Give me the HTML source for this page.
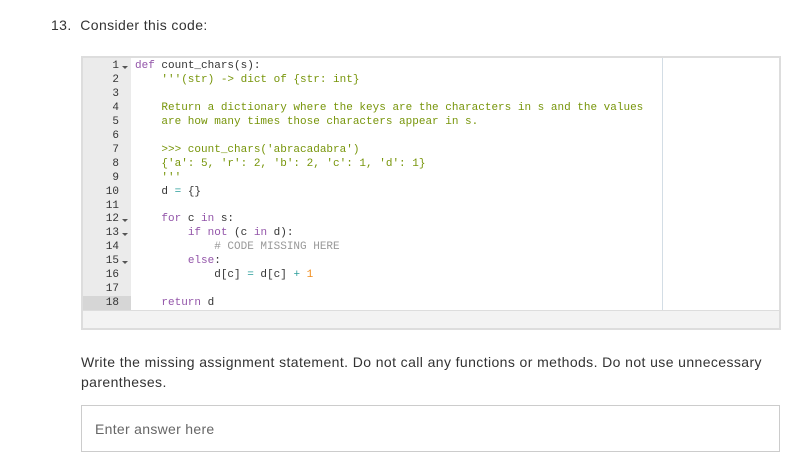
<!DOCTYPE html>
<html><head><style>
body{margin:0;width:804px;height:473px;background:#fff;font-family:"Liberation Sans",sans-serif;color:#333;position:relative;overflow:hidden}
.h{position:absolute;left:51px;top:17px;font-size:14px;color:#333;letter-spacing:0.4px}
.box{position:absolute;left:81px;top:56px;width:696px;height:270px;border:2px solid #ddd;background:#f3f3f3}
.ed{position:absolute;left:0;top:0;width:696px;height:252px;background:#fff;border-bottom:1px solid #ddd}
.gut{position:absolute;left:0;top:0;width:48px;height:252px;background:#ebebeb}
.pm{position:absolute;left:579px;top:0;width:1px;height:252px;background:#d3dde5}
.lines{position:absolute;left:0;top:2px;font-family:"Liberation Mono",monospace;font-size:11px;line-height:13.95px;white-space:pre}
.n{position:absolute;left:0;width:36px;text-align:right;color:#333}
.n.f::after{content:"";position:absolute;right:-9px;top:6px;border:3px solid transparent;border-top:3px solid #555}
.c{position:absolute;left:52px;color:#333}
.s{color:#77950a}.k{color:#9355a9}.o{color:#2a9d9a}.m{color:#999}.num{color:#f08c1c}
.act{position:absolute;left:0;top:238px;width:48px;height:14px;background:#d6d6d6}
.q{position:absolute;left:81px;top:352px;width:700px;font-size:14px;line-height:20px;color:#333;letter-spacing:0.4px}
.in{position:absolute;left:81px;top:405px;width:699px;height:47px;border:1px solid #ccc;box-sizing:border-box}
.in span{position:absolute;left:13px;top:15px;font-size:14px;color:#666;letter-spacing:0.3px}
</style></head><body>
<div class="h">13.&nbsp;&nbsp;Consider this code:</div>
<div class="box">
<div class="ed">
<div class="gut"></div><div class="act"></div><div class="pm"></div>
<div class="lines">
<div class="n f" style="top:0">1</div><div class="c" style="top:0"><span class="k">def</span> count_chars(s):</div>
<div class="n" style="top:13.95px">2</div><div class="c s" style="top:13.95px">    '''(str) -> dict of {str: int}</div>
<div class="n" style="top:27.9px">3</div>
<div class="n" style="top:41.85px">4</div><div class="c s" style="top:41.85px">    Return a dictionary where the keys are the characters in s and the values</div>
<div class="n" style="top:55.8px">5</div><div class="c s" style="top:55.8px">    are how many times those characters appear in s.</div>
<div class="n" style="top:69.75px">6</div>
<div class="n" style="top:83.7px">7</div><div class="c s" style="top:83.7px">    &gt;&gt;&gt; count_chars('abracadabra')</div>
<div class="n" style="top:97.65px">8</div><div class="c s" style="top:97.65px">    {'a': 5, 'r': 2, 'b': 2, 'c': 1, 'd': 1}</div>
<div class="n" style="top:111.6px">9</div><div class="c s" style="top:111.6px">    '''</div>
<div class="n" style="top:125.55px">10</div><div class="c" style="top:125.55px">    d <span class="o">=</span> {}</div>
<div class="n" style="top:139.5px">11</div>
<div class="n f" style="top:153.45px">12</div><div class="c" style="top:153.45px">    <span class="k">for</span> c <span class="k">in</span> s:</div>
<div class="n f" style="top:167.4px">13</div><div class="c" style="top:167.4px">        <span class="k">if</span> <span class="k">not</span> (c <span class="k">in</span> d):</div>
<div class="n" style="top:181.35px">14</div><div class="c m" style="top:181.35px">            # CODE MISSING HERE</div>
<div class="n f" style="top:195.3px">15</div><div class="c" style="top:195.3px">        <span class="k">else</span>:</div>
<div class="n" style="top:209.25px">16</div><div class="c" style="top:209.25px">            d[c] <span class="o">=</span> d[c] <span class="o">+</span> <span class="num">1</span></div>
<div class="n" style="top:223.2px">17</div>
<div class="n" style="top:237.15px">18</div><div class="c" style="top:237.15px">    <span class="k">return</span> d</div>
</div>
</div>
</div>
<div class="q">Write the missing assignment statement. Do not call any functions or methods. Do not use unnecessary parentheses.</div>
<div class="in"><span>Enter answer here</span></div>
</body></html>
